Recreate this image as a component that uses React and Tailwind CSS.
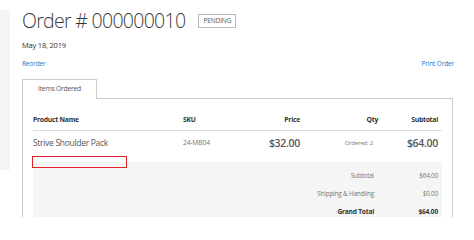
const rows = [
  { label: "Subtotal", value: "$64.00" },
  { label: "Shipping & Handling", value: "$0.00" },
];

export default function App() {
  return (
    <div
      className="relative w-[474px] h-[217px] overflow-hidden bg-white text-[#333]"
      style={{ fontFamily: '"Open Sans", "Liberation Sans", sans-serif' }}
    >
      <div className="flex">
        {/* sidebar edge */}
        <div className="w-[10px] h-[160px] mt-[10px] bg-[#f5f5f5]" />

        <div className="w-[432px] ml-[12px]">
          {/* ===== TITLE ===== */}
          <div className="flex items-center h-[40px] pt-[1px]">
            <h1 className="text-[19.5px] font-light tracking-[-0.7px] leading-none text-[#3a3a3a]">
              Order # 000000010
            </h1>
            <span className="ml-[13px] mt-[1px] h-[14px] px-[4px] flex items-center border border-[#bbb] text-[6.5px] tracking-[-0.1px] text-[#555]">
              PENDING
            </span>
          </div>

          <p className="text-[7.5px] tracking-[-0.2px] leading-[10px] text-[#333]">May 18, 2019</p>

          <div className="mt-[9px] flex justify-between text-[6.6px] tracking-[-0.2px] leading-[10px] text-[#1979c3]">
            <span>Reorder</span>
            <span>Print Order</span>
          </div>

          {/* ===== TAB ===== */}
          <div className="mt-[10px] flex">
            <div className="relative z-10 -mb-px w-[75px] h-[20px] bg-white border border-b-0 border-[#ccc] flex items-center pl-[15px] text-[6.8px] tracking-[-0.25px] text-[#575757]">
              Items Ordered
            </div>
          </div>

          {/* ===== ORDER BOX ===== */}
          <div className="w-[431px] h-[140px] border border-[#ccc] px-[10px] pt-[12px]">
            <div className="grid grid-cols-[150px_67px_50px_78px_64px] h-[20px] items-center border-b border-[#ddd] text-[6.8px] tracking-[-0.25px] font-bold text-[#333]">
              <span>Product Name</span>
              <span>SKU</span>
              <span className="text-right">Price</span>
              <span className="text-right">Qty</span>
              <span className="text-right pr-[4px]">Subtotal</span>
            </div>

            <div className="grid grid-cols-[150px_67px_50px_73px_69px] h-[31px] items-start pt-[5px]">
              <div>
                <p className="text-[8.5px] tracking-[-0.3px] leading-[14px] text-[#575757]">Strive Shoulder Pack</p>
                <div className="ml-[-1px] mt-[6px] w-[95px] h-[12px] border-[1.5px] border-[#e0202a]" />
              </div>
              <span className="text-[6.8px] tracking-[-0.2px] leading-[14px] text-[#777]">24-MB04</span>
              <span className="text-right text-[10.5px] tracking-[-0.3px] leading-[14px] font-semibold text-[#575757]">$32.00</span>
              <span className="text-right text-[6px] tracking-[-0.2px] leading-[14px] text-[#777]">Ordered: 2</span>
              <span className="text-right pr-[4px] text-[10.5px] tracking-[-0.3px] leading-[14px] font-semibold text-[#575757]">$64.00</span>
            </div>

            {/* ===== TOTALS ===== */}
            <div className="bg-[#f5f5f5] pt-[5px] h-[60px]">
              {rows.map((r, i) => (
                <div key={i} className="grid grid-cols-[1fr_66px] h-[18px] items-center text-[6.4px] tracking-[-0.2px] text-[#777]">
                  <span className="text-right pr-[2px]">{r.label}</span>
                  <span className="text-right pr-[4px]">{r.value}</span>
                </div>
              ))}
              <div className="grid grid-cols-[1fr_66px] h-[18px] items-center text-[6.6px] tracking-[-0.2px] font-bold text-[#333]">
                <span className="text-right pr-[2px]">Grand Total</span>
                <span className="text-right pr-[4px]">$64.00</span>
              </div>
            </div>
          </div>
        </div>
      </div>
    </div>
  );
}
